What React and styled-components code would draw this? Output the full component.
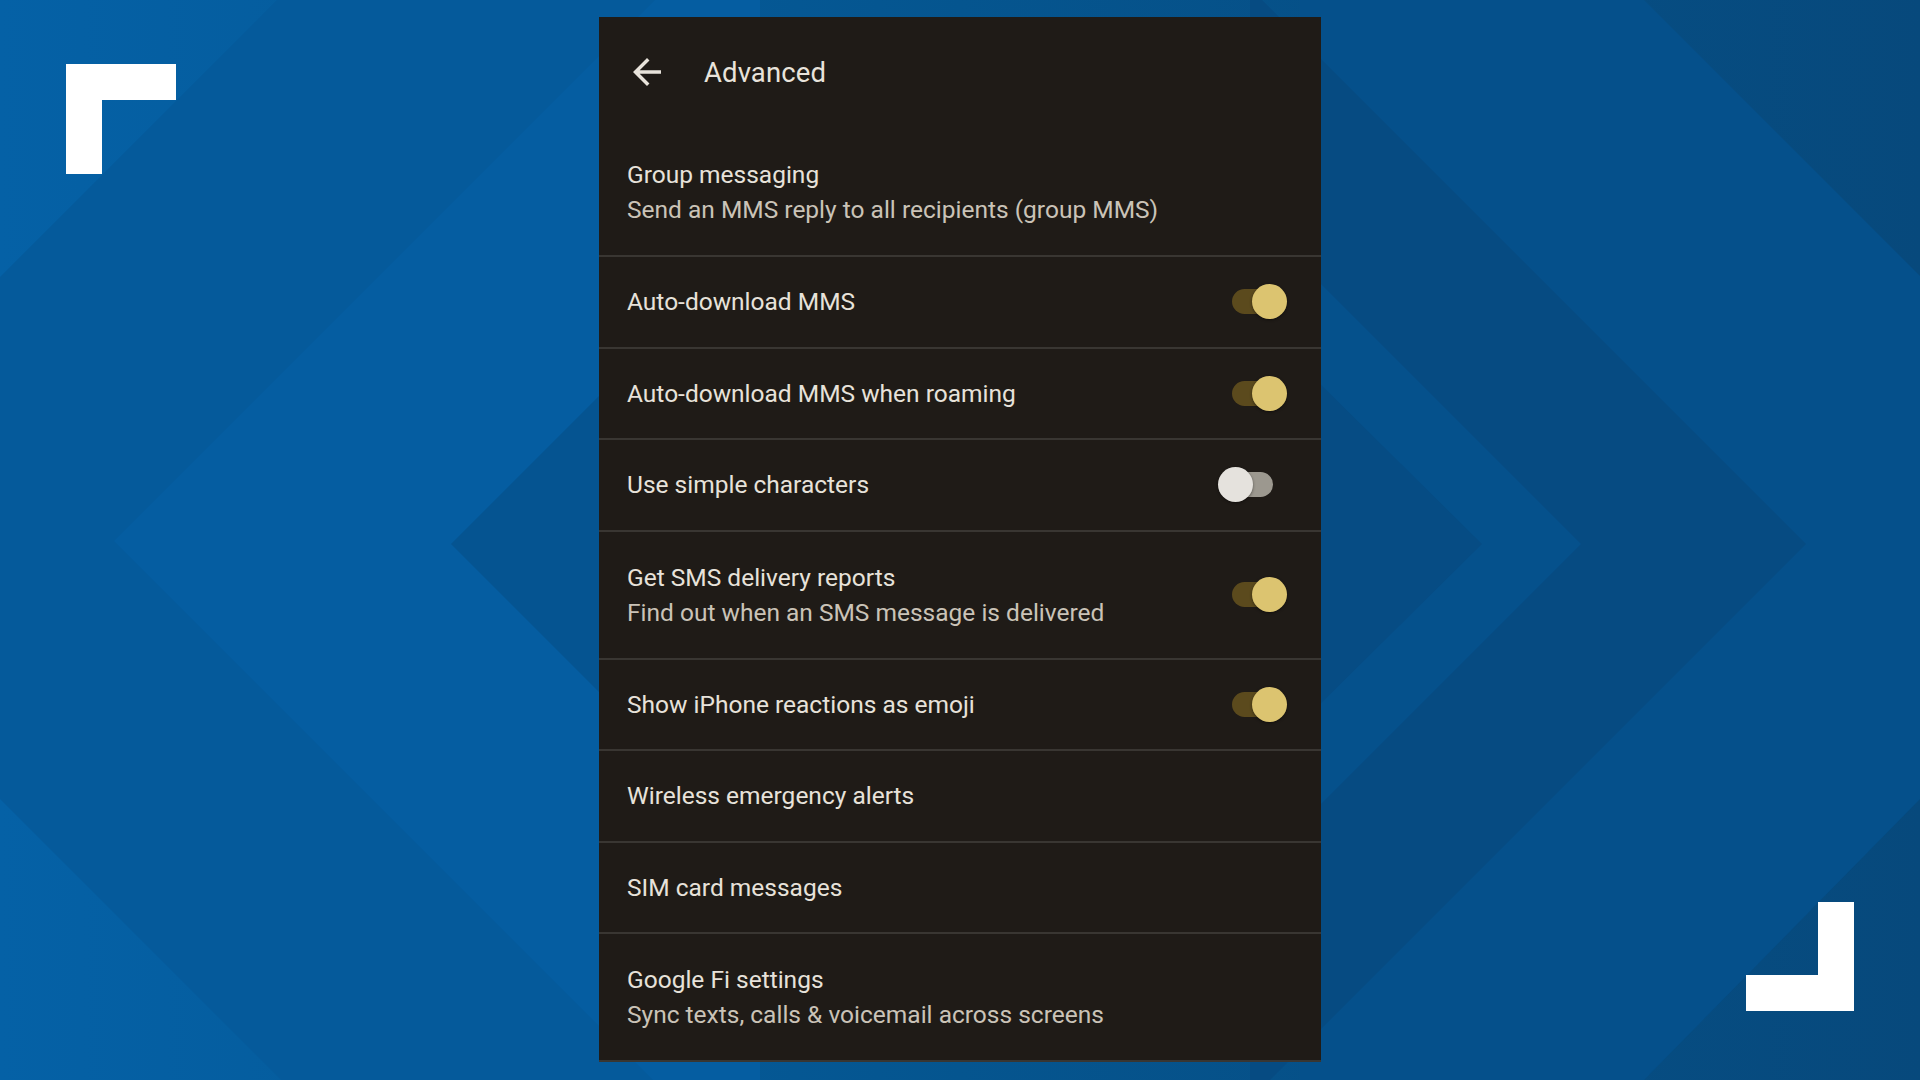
import React from "react";
import styled, { createGlobalStyle } from "styled-components";

const settings = [
  { title: "Group messaging", summary: "Send an MMS reply to all recipients (group MMS)" },
  { title: "Auto-download MMS", toggle: true },
  { title: "Auto-download MMS when roaming", toggle: true },
  { title: "Use simple characters", toggle: false },
  { title: "Get SMS delivery reports", summary: "Find out when an SMS message is delivered", toggle: true },
  { title: "Show iPhone reactions as emoji", toggle: true },
  { title: "Wireless emergency alerts" },
  { title: "SIM card messages" },
  { title: "Google Fi settings", summary: "Sync texts, calls & voicemail across screens" },
];

function Backdrop() {
  return (
    <BackdropSvg viewBox="0 0 1920 1080" preserveAspectRatio="none">
      <defs>
        <linearGradient id="base" x1="0" y1="0" x2="1" y2="0">
          <stop offset="0" stopColor="#0561a6" />
          <stop offset="0.5" stopColor="#05558f" />
          <stop offset="1" stopColor="#07497c" />
        </linearGradient>
      </defs>
      <rect width="1920" height="1080" fill="url(#base)" />
      {/* left chevrons */}
      <polygon points="277,0 760,0 760,1080 281,1080 0,799 0,277" fill="#055a9b" />
      <polygon points="114,541 655,0 760,0 760,1080 653,1080" fill="#055da1" />
      <polygon points="451,544 760,235 760,853" fill="#055491" />
      {/* right chevrons */}
      <polygon points="1300,0 1644,0 1920,276 1920,799 1644,1080 1300,1080" fill="#05508b" />
      <polygon points="1250,0 1262,0 1806,544 1270,1080 1250,1080" fill="#064b82" />
      <polygon points="1300,263 1581,544 1300,825" fill="#05518c" />
      <polygon points="1300,364 1482,544 1300,724" fill="#064c84" />
      {/* corner marks */}
      <path d="M66 64H176V100H102V174H66Z" fill="#ffffff" />
      <path d="M1818 902H1854V1011H1746V975H1818Z" fill="#ffffff" />
    </BackdropSvg>
  );
}

function BackArrow() {
  return (
    <ArrowSvg viewBox="0 0 24 24">
      <path d="M20 11H7.83l5.59-5.59L12 4l-8 8 8 8 1.41-1.41L7.83 13H20v-2z" fill="currentColor" />
    </ArrowSvg>
  );
}

function Switch({ on }) {
  return (
    <SwitchBox>
      <Track on={on ? 1 : 0} />
      <Knob on={on ? 1 : 0} />
    </SwitchBox>
  );
}

function App() {
  return (
    <>
      <GlobalStyle />
      <Stage>
        <Backdrop />
        <Panel>
          <Header>
            <BackArrow />
            <HeaderTitle>Advanced</HeaderTitle>
          </Header>
          {settings.map((s) => (
            <Row key={s.title} tall={s.summary ? 1 : 0}>
              <Texts>
                <Title>{s.title}</Title>
                {s.summary && <Summary>{s.summary}</Summary>}
              </Texts>
              {s.toggle !== undefined && <Switch on={s.toggle} />}
            </Row>
          ))}
        </Panel>
      </Stage>
    </>
  );
}

export default App;

const GlobalStyle = createGlobalStyle`
  html, body {
    margin: 0;
    padding: 0;
    background: #05548f;
  }
  body {
    font-family: Roboto, "Noto Sans", sans-serif;
  }
`;

const Stage = styled.div`
  position: relative;
  width: 1920px;
  height: 1080px;
  overflow: hidden;
  display: flex;
  justify-content: center;
  align-items: flex-start;
  padding-top: 17px;
  box-sizing: border-box;
`;

const BackdropSvg = styled.svg`
  position: absolute;
  inset: 0;
  width: 1920px;
  height: 1080px;
  z-index: 0;
`;

const Panel = styled.div`
  position: relative;
  z-index: 1;
  width: 722px;
  background: #1f1b17;
  display: flex;
  flex-direction: column;
`;

const Header = styled.div`
  box-sizing: border-box;
  height: 112px;
  display: flex;
  align-items: center;
  padding: 0 0 2px 27px;
  gap: 36px;
  color: #e8e3db;
`;

const ArrowSvg = styled.svg`
  width: 42px;
  height: 42px;
  flex-shrink: 0;
`;

const HeaderTitle = styled.div`
  font-size: 27.5px;
  letter-spacing: 0.1px;
`;

const Row = styled.div`
  box-sizing: border-box;
  height: ${(p) => (p.tall ? "128px" : "91.5px")};
  display: flex;
  align-items: center;
  justify-content: space-between;
  padding: 0 34px 0 28px;
  border-bottom: 2px solid #393632;
`;

const Texts = styled.div`
  display: flex;
  flex-direction: column;
`;

const Title = styled.div`
  font-size: 24.5px;
  line-height: 35px;
  color: #e7e2da;
`;

const Summary = styled.div`
  font-size: 24.5px;
  line-height: 35px;
  color: #cac3b7;
`;

const SwitchBox = styled.div`
  position: relative;
  width: 69px;
  height: 35px;
  flex-shrink: 0;
`;

const Track = styled.div`
  position: absolute;
  top: 5px;
  left: ${(p) => (p.on ? "14px" : "5px")};
  width: 50px;
  height: 25px;
  border-radius: 13px;
  background: ${(p) => (p.on ? "#5b4a1d" : "#9c988f")};
`;

const Knob = styled.div`
  position: absolute;
  top: 0;
  left: ${(p) => (p.on ? "34px" : "0")};
  width: 35px;
  height: 35px;
  border-radius: 50%;
  background: ${(p) => (p.on ? "#dcc470" : "#e5e2dd")};
  box-shadow: 0 1px 3px rgba(0, 0, 0, 0.45);
`;
